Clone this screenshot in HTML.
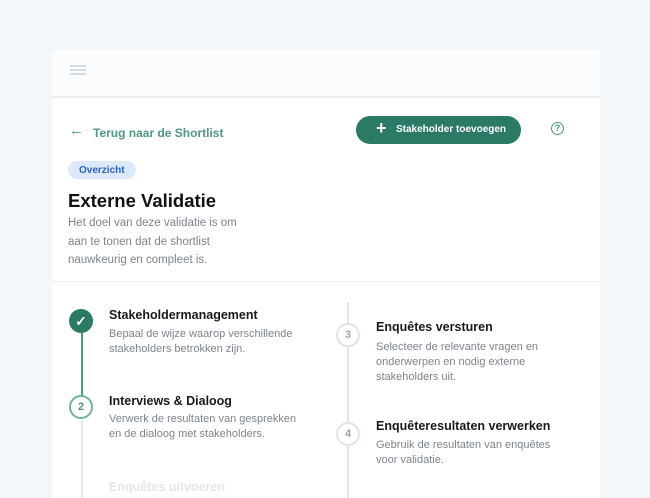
<!DOCTYPE html><html><head><style>
body{margin:0;width:650px;height:498px;background:#f4f7f9;font-family:"Liberation Sans",sans-serif;position:relative;overflow:hidden}
.a{position:absolute}
.card{left:52px;top:50px;width:548px;height:448px;background:#fff}
.t{position:absolute;white-space:nowrap}
.h{font-weight:bold;color:#1a1a1a;font-size:12.5px}
.d{color:#7d858c;font-size:11px;line-height:15px}
.c{position:absolute;width:24px;height:24px;border-radius:50%;box-sizing:border-box;text-align:center;line-height:21px;font-size:11px;font-weight:bold;background:#fff}
</style></head><body>
<div class="a card"></div>
<div class="a" style="left:52px;top:50px;width:548px;height:46px;background:#fafcfd"></div>
<div class="a" style="left:52px;top:96px;width:548px;height:2px;background:#e9edf0"></div>
<div class="a" style="left:70px;top:65px;width:16px;height:2px;background:#d6dbe0;box-shadow:0 4px 0 #d6dbe0,0 8px 0 #d6dbe0"></div>
<div class="t" style="left:69px;top:122px;color:#4b9a82;font-size:15px">←</div>
<div class="t" style="left:93px;top:126px;color:#4b9a82;font-size:12px;font-weight:bold">Terug naar de Shortlist</div>
<div class="a" style="left:356px;top:116px;width:165px;height:28px;border-radius:14px;background:#2b7a66"></div>
<div class="t" style="left:376px;top:118px;color:#fff;font-size:18px;font-weight:bold">+</div>
<div class="t" style="left:396px;top:124px;color:#fff;font-size:10px;font-weight:bold">Stakeholder toevoegen</div>
<div class="a" style="left:551px;top:122px;width:11px;height:11px;border:1.5px solid #4b9a82;border-radius:50%;color:#4b9a82;font-size:9px;text-align:center;line-height:11px;font-weight:bold">?</div>
<div class="a" style="left:68px;top:161px;width:68px;height:18px;border-radius:9px;background:#dce9fb"></div>
<div class="t" style="left:79px;top:165px;color:#2f62c4;font-size:10px;font-weight:bold">Overzicht</div>
<div class="t" style="left:68px;top:190px;font-size:18.5px;font-weight:bold;color:#111">Externe Validatie</div>
<div class="t d" style="left:68px;top:214px;font-size:11.5px;line-height:18.5px">Het doel van deze validatie is om<br>aan te tonen dat de shortlist<br>nauwkeurig en compleet is.</div>
<div class="a" style="left:52px;top:281px;width:548px;height:1px;background:#eef1f3"></div>
<div class="a" style="left:81px;top:320px;width:2px;height:80px;background:#4b9a82"></div>
<div class="a" style="left:81px;top:420px;width:2px;height:78px;background:#e4e9ed"></div>
<div class="a" style="left:347px;top:302px;width:2px;height:196px;background:#e1e6eb"></div>
<div class="c" style="left:69px;top:309px;background:#2b7a66;color:#fff;font-size:14px;line-height:24px">✓</div>
<div class="c" style="left:69px;top:395px;border:2px solid #6fb39e;color:#4b9a82">2</div>
<div class="c" style="left:336px;top:323px;border:2px solid #dfe5ec;color:#9aa3ab">3</div>
<div class="c" style="left:336px;top:422px;border:2px solid #dfe5ec;color:#9aa3ab">4</div>
<div class="t h" style="left:109px;top:308px">Stakeholdermanagement</div>
<div class="t d" style="left:109px;top:327px">Bepaal de wijze waarop verschillende<br>stakeholders betrokken zijn.</div>
<div class="t h" style="left:109px;top:394px">Interviews &amp; Dialoog</div>
<div class="t d" style="left:109px;top:412px">Verwerk de resultaten van gesprekken<br>en de dialoog met stakeholders.</div>
<div class="t h" style="left:376px;top:320px">Enquêtes versturen</div>
<div class="t d" style="left:376px;top:340px">Selecteer de relevante vragen en<br>onderwerpen en nodig externe<br>stakeholders uit.</div>
<div class="t h" style="left:376px;top:419px">Enquêteresultaten verwerken</div>
<div class="t d" style="left:376px;top:438px">Gebruik de resultaten van enquêtes<br>voor validatie.</div>
<div class="t" style="left:109px;top:480px;font-size:12.5px;color:#e3e7eb;font-weight:bold">Enquêtes uitvoeren</div>
</body></html>
